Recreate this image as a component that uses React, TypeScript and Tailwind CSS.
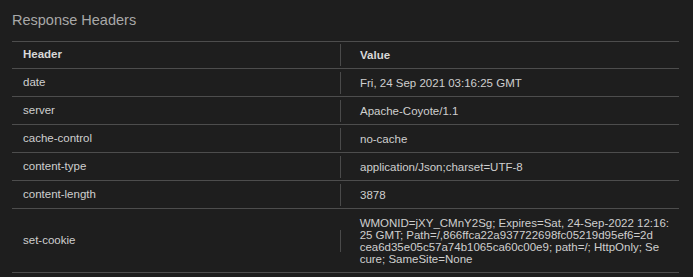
import React from "react";

const cookieLines = [
  "WMONID=jXY_CMnY2Sg; Expires=Sat, 24-Sep-2022 12:16:",
  "25 GMT; Path=/,866ffca22a937722698fc05219d95ef6=2d",
  "cea6d35e05c57a74b1065ca60c00e9; path=/; HttpOnly; Se",
  "cure; SameSite=None",
];

const rows: { k: string; v: React.ReactNode; tall?: boolean }[] = [
  { k: "date", v: "Fri, 24 Sep 2021 03:16:25 GMT" },
  { k: "server", v: "Apache-Coyote/1.1" },
  { k: "cache-control", v: "no-cache" },
  { k: "content-type", v: "application/Json;charset=UTF-8" },
  { k: "content-length", v: "3878" },
  {
    k: "set-cookie",
    v: (
      <>
        {cookieLines.map((l, i) => (
          <div key={i} className="whitespace-nowrap">
            {l}
          </div>
        ))}
      </>
    ),
    tall: true,
  },
];

function Row({
  k,
  v,
  tall,
  head,
}: {
  k: string;
  v: React.ReactNode;
  tall?: boolean;
  head?: boolean;
}) {
  return (
    <div
      className={
        "flex items-center border-b border-[#4d4d4d] " +
        (tall ? "h-[64px]" : head ? "h-[27px]" : "h-[28px]")
      }
    >
      <div
        className={
          "w-[328px] pl-[11px] " + (head ? "font-bold text-[#d8d8d8]" : "text-[#cfcfcf]")
        }
      >
        {k}
      </div>
      <div className="w-px h-[22px] bg-[#4a4a4a]" />
      <div
        className={
          "flex-1 pl-[19px] pr-[10px] leading-[12px] " +
          (head ? "font-bold text-[#d8d8d8]" : "text-[#cfcfcf]")
        }
      >
        {v}
      </div>
    </div>
  );
}

export default function App() {
  return (
    <div
      className="w-[693px] h-[277px] bg-[#1e1e1e] overflow-hidden"
      style={{ fontFamily: '"Liberation Sans", Arial, sans-serif' }}
    >
      <div className="pl-[12px] pt-[12px] h-[41px] text-[14.5px] leading-[17px] text-[#a8a8a8]">
        Response Headers
      </div>
      <div className="mx-[12px] w-[667px] border-t border-[#4d4d4d] text-[11.5px]">
        <Row k="Header" v="Value" head />
        {rows.map((r) => (
          <Row key={r.k} k={r.k} v={r.v} tall={r.tall} />
        ))}
      </div>
    </div>
  );
}
